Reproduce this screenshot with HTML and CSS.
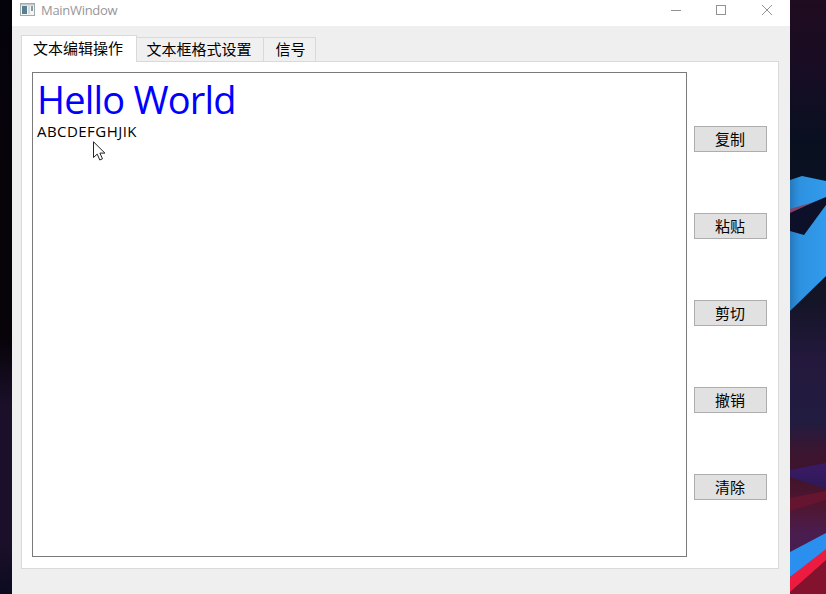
FILE: index.html
```html
<!DOCTYPE html>
<html lang="zh-CN">
<head>
    <meta charset="UTF-8">
    <title>MainWindow</title>
    <link rel="stylesheet" href="styles.css">
</head>
<body>
    <div class="desktop">
        <div class="wallpaper-left"></div>
        <div class="window">
            <div class="title-bar">
                <svg class="app-icon" width="15" height="13" viewBox="0 0 15 13">
                    <rect x="0.5" y="0.5" width="14" height="12" fill="#f4f5f6" stroke="#a3a8ad"/>
                    <rect x="1" y="1" width="13" height="1.5" fill="#c3c8cc"/>
                    <rect x="2" y="3" width="5" height="8" fill="#56808f"/>
                    <rect x="8" y="3" width="2" height="8" fill="#d5dade"/>
                    <rect x="11" y="3" width="2" height="5" fill="#8d989f"/>
                </svg>
                <span class="title">MainWindow</span>
                <svg class="window-controls" width="102" height="12" viewBox="0 0 102 12" fill="none" stroke="#929296">
                    <path d="M0 6.5h10"/>
                    <rect x="45.5" y="1.5" width="9" height="9"/>
                    <path d="M91 1l10 10M101 1l-10 10"/>
                </svg>
            </div>
            <div class="content">
                <div class="tabs">
                    <div class="tab active">文本编辑操作</div>
                    <div class="tab tab-format">文本框格式设置</div>
                    <div class="tab tab-signal">信号</div>
                </div>
                <div class="pane">
                    <div class="editor">
                        <div class="heading">Hello World</div>
                        <div class="line">ABCDEFGHJIK</div>
                        <svg class="cursor" width="13" height="20" viewBox="0 0 13 20">
                            <path d="M0.5 0.8v15.7l3.7-3.4 2.6 5.9 2.7-1.2-2.6-5.7h5z" fill="#fff" stroke="#222"/>
                        </svg>
                    </div>
                    <div class="buttons">
                        <button>复制</button>
                        <button>粘贴</button>
                        <button>剪切</button>
                        <button>撤销</button>
                        <button>清除</button>
                    </div>
                </div>
            </div>
        </div>
        <svg class="wallpaper-right" width="36" height="594" viewBox="0 0 36 594">
            <defs>
                <linearGradient id="night" x1="0" y1="0" x2="0" y2="1">
                    <stop offset="0" stop-color="#200b20"/>
                    <stop offset="0.12" stop-color="#180d24"/>
                    <stop offset="0.24" stop-color="#081020"/>
                    <stop offset="0.5" stop-color="#131426"/>
                    <stop offset="0.61" stop-color="#24193d"/>
                    <stop offset="0.71" stop-color="#211c40"/>
                    <stop offset="0.76" stop-color="#3b1530"/>
                    <stop offset="0.8" stop-color="#40132b"/>
                    <stop offset="0.85" stop-color="#501630"/>
                    <stop offset="0.9" stop-color="#4a1d50"/>
                    <stop offset="1" stop-color="#471b48"/>
                </linearGradient>
                <linearGradient id="sky" x1="0" y1="0" x2="1" y2="0">
                    <stop offset="0" stop-color="#2779bb"/>
                    <stop offset="0.25" stop-color="#2d91df"/>
                    <stop offset="1" stop-color="#329bed"/>
                </linearGradient>
                <linearGradient id="violet" x1="0" y1="0" x2="0" y2="1">
                    <stop offset="0" stop-color="#3a1b67"/>
                    <stop offset="1" stop-color="#2d1956"/>
                </linearGradient>
            </defs>
            <rect width="36" height="594" fill="url(#night)"/>
            <path d="M0 180L12 176L36 181V276L0 311Z" fill="url(#sky)"/>
            <path d="M0 212L36 197V205L14 235L0 231Z" fill="#0c1028"/>
            <path d="M0 209L24 202L0 213Z" fill="#854466"/>
            <path d="M0 470L36 463V489L0 477Z" fill="url(#violet)"/>
            <path d="M0 498L36 491V500L0 511Z" fill="#661530"/>
            <path d="M0 552L36 533V553L0 577Z" fill="#2b8ff0"/>
            <path d="M0 577L36 549V565L0 594Z" fill="#ec1c40"/>
            <path d="M0 592L36 560V594H0Z" fill="#83122e"/>
        </svg>
    </div>
</body>
</html>
```

FILE: styles.css
```css
body {
    margin: 0;
    overflow: hidden;
    font-family: "Open Sans", "Noto Sans CJK SC", sans-serif;
    font-size: 15px;
    color: #000;
}
.desktop {
    display: flex;
    height: 594px;
}
.wallpaper-left {
    width: 12px;
    background: linear-gradient(#05030a 0%, #070309 57%, #1a1029 68%, #1b1029 92%, #0b0b20 100%);
}
.wallpaper-right {
    display: block;
}
.window {
    display: flex;
    flex-direction: column;
    width: 778px;
    background: #efefef;
}
.title-bar {
    display: flex;
    align-items: flex-start;
    box-sizing: border-box;
    height: 26px;
    padding: 3px 17px 0 8px;
    background: #fff;
}
.title {
    margin-left: 6px;
    font-size: 13px;
    line-height: 15px;
    letter-spacing: -0.3px;
    color: #96969a;
}
.window-controls {
    margin: 1px 0 0 auto;
}
.content {
    display: flex;
    flex-direction: column;
    flex: 1;
    padding: 9px 11px 25px 9px;
}
.tabs {
    display: flex;
    align-items: flex-end;
    height: 27px;
    margin-bottom: -1px;
}
.tab {
    box-sizing: border-box;
    width: 128px;
    height: 25px;
    padding-right: 2px;
    border: 1px solid #d9d9d9;
    line-height: 23px;
    text-align: center;
    white-space: nowrap;
    background: #f0f0f0;
}
.tab.active {
    z-index: 1;
    width: 116px;
    height: 27px;
    border-bottom: none;
    line-height: 25px;
    background: #fff;
}
.tab-format {
    margin-left: -1px;
}
.tab-signal {
    width: 53px;
    margin-left: -1px;
    padding: 0 0 0 2px;
}
.pane {
    display: flex;
    box-sizing: border-box;
    flex: 1;
    gap: 7px;
    padding: 10px;
    border: 1px solid #d9d9d9;
    background: #fff;
}
.editor {
    position: relative;
    box-sizing: border-box;
    width: 655px;
    margin-bottom: 1px;
    padding: 3px 4px;
    border: 1px solid #7a7a7a;
}
.heading {
    font-size: 38px;
    line-height: 46px;
    letter-spacing: -0.8px;
    color: #0000ff;
}
.line {
    font-size: 15px;
    line-height: 18px;
    letter-spacing: 0.45px;
}
.cursor {
    position: absolute;
    top: 68px;
    left: 60px;
}
.buttons {
    display: flex;
    flex-direction: column;
    gap: 61px;
    padding-top: 54px;
}
button {
    box-sizing: border-box;
    width: 73px;
    height: 26px;
    padding: 0 1px 0 0;
    border: 1px solid #adadad;
    font: inherit;
    line-height: 24px;
    color: #000;
    background: #e1e1e1;
}
```
